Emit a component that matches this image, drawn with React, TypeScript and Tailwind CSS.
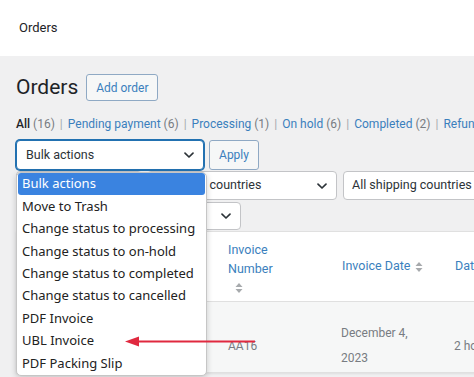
import React from "react";

const Chevron = ({ className = "" }: { className?: string }) => (
  <svg width="16" height="16" viewBox="0 0 16 16" className={className}>
    <path d="M4 6.2 L8 10 L12 6.2" fill="none" stroke="#2c3338" strokeWidth="1.7" strokeLinecap="round" strokeLinejoin="round" />
  </svg>
);

const SortArrows = ({ className = "" }: { className?: string }) => (
  <svg width="8" height="12" viewBox="0 0 8 12" className={className}>
    <path d="M4 1 L7.5 5 L0.5 5 Z" fill="#a7aaad" />
    <path d="M0.5 7 L7.5 7 L4 11 Z" fill="#a7aaad" />
  </svg>
);

const Sep = () => <span className="mx-[5px] text-[#a7aaad]">|</span>;

const items = [
  "Bulk actions",
  "Move to Trash",
  "Change status to processing",
  "Change status to on-hold",
  "Change status to completed",
  "Change status to cancelled",
  "PDF Invoice",
  "UBL Invoice",
  "PDF Packing Slip",
];

export default function App() {
  return (
    <div
      className="relative w-[474px] h-[377px] overflow-hidden bg-[#f0f0f1] text-[#1d2327]"
      style={{ fontFamily: "Roboto, 'Liberation Sans', sans-serif" }}
    >
      {/* top bar */}
      <div className="h-[56px] bg-white flex items-center px-[19px] text-[13px] text-[#1d2327]">
        Orders
      </div>

      <div className="px-4 pt-[18px] whitespace-nowrap">
        {/* heading */}
        <div className="flex items-center h-[27px]">
          <h1 className="text-[21px] leading-none text-[#1d2327]">Orders</h1>
          <div className="ml-[8px] w-[72px] h-[27px] flex items-center justify-center border border-[#8fa9c4] rounded-[3px] bg-[#f6f7f7] text-[12px] text-[#3b7fbd]">
            Add order
          </div>
        </div>

        {/* status links */}
        <div className="mt-[14px] h-[18px] flex items-center text-[12px]">
          <span className="font-medium text-[#1d2327]">All</span>
          <span className="ml-[3px] text-[#787c82]">(16)</span>
          <Sep />
          <span className="text-[#3b7fbd]">Pending payment</span>
          <span className="ml-[3px] text-[#787c82]">(6)</span>
          <Sep />
          <span className="text-[#3b7fbd]">Processing</span>
          <span className="ml-[3px] text-[#787c82]">(1)</span>
          <Sep />
          <span className="text-[#3b7fbd]">On hold</span>
          <span className="ml-[3px] text-[#787c82]">(6)</span>
          <Sep />
          <span className="text-[#3b7fbd]">Completed</span>
          <span className="ml-[3px] text-[#787c82]">(2)</span>
          <Sep />
          <span className="text-[#3b7fbd]">Refunded</span>
          <span className="ml-[3px] text-[#787c82]">(1)</span>
        </div>

        {/* row 1 */}
        <div className="mt-[7px] flex items-center">
          <div className="shrink-0 w-[188px] h-[30px] flex items-center justify-between pl-[9px] pr-[6px] bg-white border border-[#2271b1] rounded-[4px] shadow-[0_0_0_1px_#2271b1] text-[12.5px] text-[#2c3338]">
            <span>Bulk actions</span>
            <Chevron />
          </div>
          <div className="shrink-0 ml-[5px] w-[50px] h-[30px] flex items-center justify-center border border-[#8fa9c4] rounded-[3px] bg-[#f6f7f7] text-[12px] text-[#3b7fbd]">
            Apply
          </div>
        </div>

        {/* row 2 */}
        <div className="mt-[1px] flex items-center">
          <div className="shrink-0 w-[126px] h-[29px] flex items-center justify-between pl-[8px] pr-[6px] bg-white border border-[#c3c4c7] rounded-[4px] text-[12.5px] text-[#2c3338]">
            <span>All dates</span>
            <Chevron />
          </div>
          <div className="shrink-0 ml-[5px] w-[190px] h-[29px] flex items-center justify-between pl-[8px] pr-[6px] bg-white border border-[#c3c4c7] rounded-[4px] text-[12.5px] text-[#2c3338]">
            <span>All billing countries</span>
            <Chevron />
          </div>
          <div className="shrink-0 ml-[6px] w-[200px] h-[29px] flex items-center justify-between pl-[8px] pr-[6px] bg-white border border-[#c3c4c7] rounded-[4px] text-[12.5px] text-[#2c3338]">
            <span>All shipping countries</span>
            <Chevron />
          </div>
        </div>

        {/* row 3 */}
        <div className="mt-[2px] flex items-center">
          <div className="shrink-0 w-[225px] h-[28px] flex items-center justify-between pl-[8px] pr-[6px] bg-white border border-[#c3c4c7] rounded-[4px] text-[12.5px] text-[#2c3338]">
            <span>Filter by registered customer</span>
            <Chevron />
          </div>
        </div>

        {/* table */}
        <div className="mt-[1px] w-[520px] shrink-0 bg-white border border-[#e0e0e0] shadow-[0_1px_2px_rgba(0,0,0,0.08)] text-[12.5px]">
          <div className="flex h-[70px] border-b border-[#e0e0e0]">
            <div className="w-[201px] shrink-0" />
            <div className="w-[114px] shrink-0 px-[10px] pt-[8px] flex flex-col leading-[19px] text-[#3b7fbd]">
              <span>Invoice</span>
              <span>Number</span>
              <span className="h-[19px] flex items-center pl-[7px]">
                <SortArrows />
              </span>
            </div>
            <div className="w-[113px] shrink-0 px-[10px] flex items-center text-[#3b7fbd]">
              <span>Invoice Date</span>
              <SortArrows className="ml-[5px]" />
            </div>
            <div className="px-[10px] flex items-center text-[#3b7fbd]">Date created</div>
          </div>
          <div className="flex h-[70px] bg-[#f6f7f7] pt-[18px] text-[12px] text-[#787c82]">
            <div className="w-[201px] shrink-0" />
            <div className="w-[114px] shrink-0 px-[10px] flex items-center">AA16</div>
            <div className="w-[113px] shrink-0 px-[9px] flex flex-col justify-center leading-[25px]">
              <span>December 4,</span>
              <span>2023</span>
            </div>
            <div className="px-[9px] flex items-center">2 hours ago</div>
          </div>
        </div>
      </div>

      {/* native dropdown list */}
      <div
        className="absolute left-[16px] top-[172px] w-[191px] bg-white border border-[#c6c6c6] rounded-[5px] shadow-[0_2px_6px_rgba(0,0,0,0.18)] text-[13px] text-[#222]"
        style={{ fontFamily: "'Noto Sans', 'Open Sans', sans-serif" }}
      >
        {items.map((t, i) => (
          <div
            key={t}
            className={
              i === 0
                ? "mx-[1px] h-[22.4px] flex items-center pl-[4px] rounded-[3px] bg-[#3a83e0] text-white"
                : "mx-[1px] h-[22.4px] flex items-center pl-[4px]"
            }
          >
            {t}
          </div>
        ))}
      </div>

      {/* red arrow annotation */}
      <svg className="absolute left-[120px] top-[334px]" width="140" height="15" viewBox="0 0 140 15">
        <line x1="15" y1="7.5" x2="135" y2="7.5" stroke="#e0293f" strokeWidth="2" />
        <path d="M5 7.5 L19 2.5 L19 12.5 Z" fill="#e0293f" />
      </svg>
    </div>
  );
}
